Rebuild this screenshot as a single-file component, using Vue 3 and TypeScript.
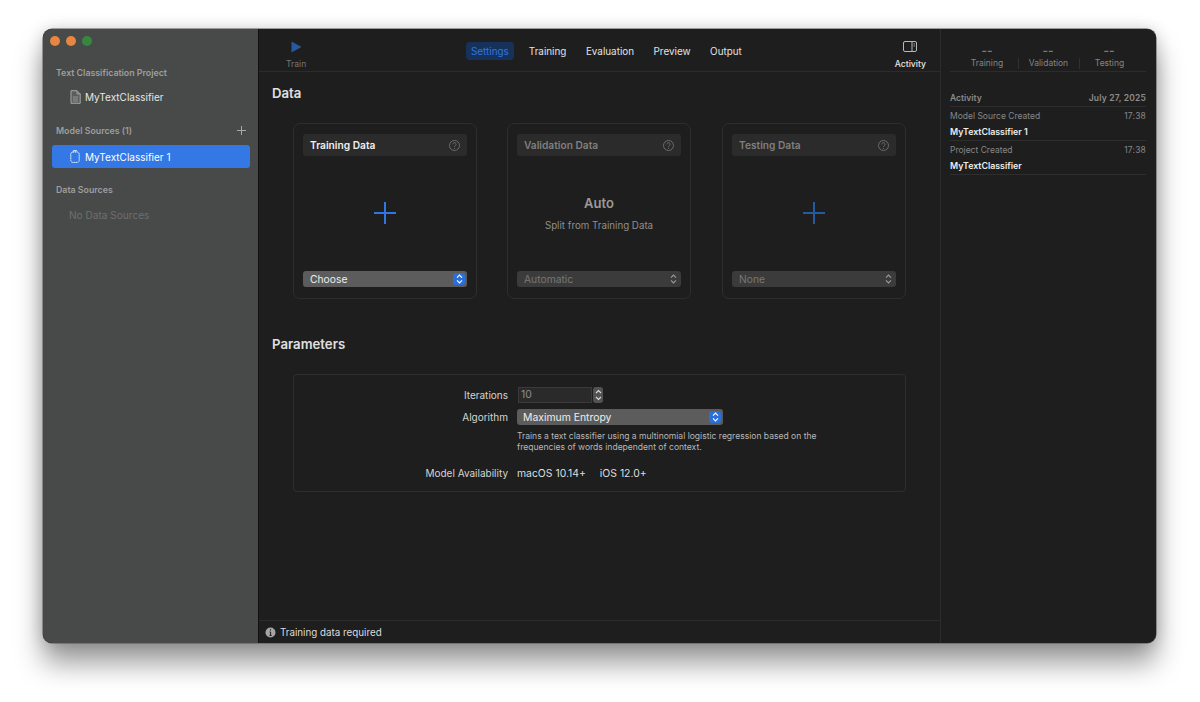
<script setup lang="ts">
const tabs = ['Settings', 'Training', 'Evaluation', 'Preview', 'Output']
const metrics = ['Training', 'Validation', 'Testing']
const activity = [
  { title: 'Model Source Created', time: '17:38', name: 'MyTextClassifier 1' },
  { title: 'Project Created', time: '17:38', name: 'MyTextClassifier' }
]
</script>

<template>
  <div class="page">
    <div class="window">
      <aside class="sidebar">
        <div class="lights">
          <span class="light orange"></span>
          <span class="light orange"></span>
          <span class="light green"></span>
        </div>
        <div class="side-head first">Text Classification Project</div>
        <div class="side-row project">
          <svg class="file-icon" width="11" height="14" viewBox="0 0 11 14" fill="none" stroke="#a5a5a5" stroke-width="1">
            <path d="M1 .7h6l3.2 3.2v9.4H1z" fill="#5b5c5c" />
            <path d="M7 .7v3.2h3.2" />
            <path d="M2.8 7h5.4M2.8 9h5.4M2.8 11h5.4" stroke-width=".8" />
          </svg>
          <span>MyTextClassifier</span>
        </div>
        <div class="side-head models">
          <span>Model Sources (1)</span>
          <svg width="9" height="9" viewBox="0 0 9 9" stroke="#a8a8a8" stroke-width="1"><path d="M4.5 0v9M0 4.5h9" /></svg>
        </div>
        <div class="side-row selected">
          <svg class="file-icon" width="10" height="13" viewBox="0 0 10 13" fill="none" stroke="#fff" stroke-width="1" stroke-dasharray="1.4 .7">
            <rect x=".8" y="2" width="8.4" height="10.4" rx="2" />
            <path d="M3 .8h4" stroke-dasharray="none" />
          </svg>
          <span>MyTextClassifier 1</span>
        </div>
        <div class="side-head sources">Data Sources</div>
        <div class="side-empty">No Data Sources</div>
      </aside>

      <main class="main">
        <header class="toolbar">
          <div class="train">
            <svg width="11" height="12" viewBox="0 0 11 12"><path d="M.5 .5 10.5 6 .5 11.5z" fill="#27599f" /></svg>
            <span>Train</span>
          </div>
          <nav class="tabs">
            <span v-for="(t, i) in tabs" :key="t" :class="['tab', { on: i === 0 }]">{{ t }}</span>
          </nav>
          <div class="activity-btn">
            <svg width="14" height="11" viewBox="0 0 14 11" fill="none" stroke="#b8b8b8" stroke-width="1">
              <rect x=".5" y=".5" width="13" height="10" rx="1.5" />
              <path d="M9 .5v10" />
              <path d="M10.5 3h1.5M10.5 5h1.5" stroke-width=".8" />
            </svg>
            <span>Activity</span>
          </div>
        </header>

        <div class="content">
          <h2 class="heading">Data</h2>
          <div class="cards">
            <section class="card">
              <div class="card-head active">
                <span>Training Data</span>
                <svg class="help" width="11" height="11" viewBox="0 0 11 11" fill="none" stroke="#6c6c6c"><circle cx="5.5" cy="5.5" r="5" /><path d="M3.9 4.3a1.6 1.6 0 1 1 2.4 1.4c-.5.3-.8.6-.8 1.2" /><path d="M5.5 7.8v1" /></svg>
              </div>
              <div class="card-body">
                <svg width="24" height="24" viewBox="0 0 24 24" stroke="#2f76e0" stroke-width="2"><path d="M12 1v22M1 12h22" /></svg>
              </div>
              <div class="select live">
                <span>Choose</span>
                <span class="chevrons blue">
                  <svg width="7" height="10" viewBox="0 0 7 10" fill="none" stroke="#fff" stroke-width="1.1"><path d="M1 3.6 3.5 1 6 3.6M1 6.4 3.5 9 6 6.4" /></svg>
                </span>
              </div>
            </section>

            <section class="card">
              <div class="card-head">
                <span>Validation Data</span>
                <svg class="help" width="11" height="11" viewBox="0 0 11 11" fill="none" stroke="#6c6c6c"><circle cx="5.5" cy="5.5" r="5" /><path d="M3.9 4.3a1.6 1.6 0 1 1 2.4 1.4c-.5.3-.8.6-.8 1.2" /><path d="M5.5 7.8v1" /></svg>
              </div>
              <div class="card-body auto">
                <strong>Auto</strong>
                <span>Split from Training Data</span>
              </div>
              <div class="select">
                <span>Automatic</span>
                <span class="chevrons">
                  <svg width="7" height="10" viewBox="0 0 7 10" fill="none" stroke="#9a9a9a" stroke-width="1.1"><path d="M1 3.6 3.5 1 6 3.6M1 6.4 3.5 9 6 6.4" /></svg>
                </span>
              </div>
            </section>

            <section class="card">
              <div class="card-head">
                <span>Testing Data</span>
                <svg class="help" width="11" height="11" viewBox="0 0 11 11" fill="none" stroke="#6c6c6c"><circle cx="5.5" cy="5.5" r="5" /><path d="M3.9 4.3a1.6 1.6 0 1 1 2.4 1.4c-.5.3-.8.6-.8 1.2" /><path d="M5.5 7.8v1" /></svg>
              </div>
              <div class="card-body">
                <svg width="24" height="24" viewBox="0 0 24 24" stroke="#265a9f" stroke-width="2"><path d="M12 1v22M1 12h22" /></svg>
              </div>
              <div class="select">
                <span>None</span>
                <span class="chevrons">
                  <svg width="7" height="10" viewBox="0 0 7 10" fill="none" stroke="#9a9a9a" stroke-width="1.1"><path d="M1 3.6 3.5 1 6 3.6M1 6.4 3.5 9 6 6.4" /></svg>
                </span>
              </div>
            </section>
          </div>

          <h2 class="heading params-heading">Parameters</h2>
          <section class="params">
            <div class="param-row first-row">
              <label>Iterations</label>
              <div class="stepper-wrap">
                <div class="num">10</div>
                <div class="stepper">
                  <svg width="7" height="12" viewBox="0 0 7 12" fill="none" stroke="#dcdcdc" stroke-width="1.1"><path d="M1 4 3.5 1.5 6 4M1 8 3.5 10.5 6 8" /></svg>
                </div>
              </div>
            </div>
            <div class="param-row algo-row">
              <label>Algorithm</label>
              <div class="select live algo">
                <span>Maximum Entropy</span>
                <span class="chevrons blue">
                  <svg width="7" height="10" viewBox="0 0 7 10" fill="none" stroke="#fff" stroke-width="1.1"><path d="M1 3.6 3.5 1 6 3.6M1 6.4 3.5 9 6 6.4" /></svg>
                </span>
              </div>
            </div>
            <p class="algo-note">Trains a text classifier using a multinomial logistic regression based on the<br />frequencies of words independent of context.</p>
            <div class="param-row avail-row">
              <label>Model Availability</label>
              <div class="avail">
                <span>macOS 10.14+</span>
                <span>iOS 12.0+</span>
              </div>
            </div>
          </section>
        </div>

        <footer class="status">
          <svg width="11" height="11" viewBox="0 0 11 11"><circle cx="5.5" cy="5.5" r="5" fill="#a5a5a5" /><path d="M5.5 2.2v1.3M4.5 5h1.1v3.4M4.4 8.4h2.3" stroke="#1e1e1e" stroke-width="1" fill="none" /></svg>
          <span>Training data required</span>
        </footer>
      </main>

      <aside class="panel">
        <div class="metrics">
          <div v-for="m in metrics" :key="m" class="metric">
            <b>--</b>
            <span>{{ m }}</span>
          </div>
        </div>
        <div class="log-head">
          <span>Activity</span>
          <span class="wide">July 27, 2025</span>
        </div>
        <div v-for="a in activity" :key="a.title" class="log-item">
          <div class="log-top">
            <span>{{ a.title }}</span>
            <span class="wide">{{ a.time }}</span>
          </div>
          <div class="log-name">{{ a.name }}</div>
        </div>
      </aside>
    </div>
  </div>
</template>

<style>
html, body { background: #fff; }
</style>

<style scoped>
.page {
  width: 1200px;
  height: 702px;
  padding: 29px 44px 59px 43px;
  box-sizing: border-box;
  overflow: hidden;
  font-family: Inter, "Liberation Sans", sans-serif;
  background: #fff;
}

.window {
  display: flex;
  height: 100%;
  border-radius: 9px;
  overflow: hidden;
  background: #1e1e1e;
  box-shadow: 0 0 0 .5px #555, 0 20px 28px rgba(0, 0, 0, .4), 0 0 16px rgba(0, 0, 0, .18);
}

.sidebar {
  width: 216px;
  flex: none;
  background: #484a49;
  border-right: 1px solid #111;
  box-sizing: border-box;
  padding-top: 7px;
  font-size: 10px;
  color: #f0f0f0;
}

.lights { display: flex; gap: 6px; padding-left: 7px; }
.light { width: 10px; height: 10px; border-radius: 50%; }
.orange { background: #e8853f; }
.green { background: #37883f; }

.side-head {
  font-size: 8.8px;
  font-weight: 600;
  color: #9d9e9e;
  padding: 0 12px 0 13px;
  display: flex;
  justify-content: space-between;
  align-items: center;
  height: 12px;
}
.first { margin-top: 20px; }
.models { margin-top: 16px; }
.sources { margin-top: 15px; }

.side-row { display: flex; align-items: center; height: 23px; }
.project { margin-top: 7px; padding-left: 27px; gap: 4px; color: #e6e6e6; }
.selected {
  margin: 9px 8px 0 9px;
  padding-left: 18px;
  gap: 5px;
  background: #3478e6;
  border-radius: 3px;
  color: #fff;
}

.side-empty { margin: 14px 0 0 26px; font-size: 10.1px; color: #6d6e6e; }

.main { width: 681px; flex: none; display: flex; flex-direction: column; }

.toolbar {
  height: 43px;
  flex: none;
  box-sizing: border-box;
  border-bottom: 1px solid #2c2c2c;
  position: relative;
  display: flex;
  justify-content: space-between;
  padding: 12px 14px 0 27px;
}
.train {
  display: flex;
  flex-direction: column;
  align-items: center;
  gap: 6px;
  font-size: 8.6px;
  color: #777;
}
.tabs {
  position: absolute;
  left: 207px;
  top: 13px;
  display: flex;
  gap: 19.5px;
  font-size: 9.9px;
  color: #e2e2e2;
}
.tab { height: 18px; line-height: 18px; border-radius: 4px; }
.tab.on {
  color: #2f76e0;
  background: #17325a;
  padding: 0 5px;
  margin-right: -4.5px;
}
.activity-btn {
  display: flex;
  flex-direction: column;
  align-items: center;
  gap: 7px;
  font-size: 8.6px;
  font-weight: 500;
  color: #e6e6e6;
}

.content { flex: 1; padding-left: 13px; color: #e6e6e6; }
.heading {
  margin: 0;
  font-size: 13.2px;
  font-weight: 600;
  line-height: 16px;
  color: #e0e0e0;
}
.content > .heading:first-child { margin-top: 13px; }

.cards { display: flex; gap: 30px; margin: 22px 0 0 21px; }
.card {
  width: 184px;
  height: 176px;
  box-sizing: border-box;
  border: 1px solid #2e2e2e;
  border-radius: 7px;
  padding: 10px 9px 11px;
  display: flex;
  flex-direction: column;
}
.card:last-child { margin-left: 1px; }
.card-head {
  height: 22px;
  flex: none;
  background: #2b2b2b;
  border-radius: 3px;
  display: flex;
  align-items: center;
  justify-content: space-between;
  padding: 0 7px;
  font-size: 10.2px;
  font-weight: 600;
  color: #7f7f7f;
}
.card-head.active { color: #f0f0f0; }
.card-body {
  flex: 1;
  display: flex;
  align-items: center;
  justify-content: center;
  padding-bottom: 1px;
}
.card-body.auto {
  flex-direction: column;
  gap: 9px;
  font-size: 9.75px;
  color: #8f8f8f;
}
.card-body.auto strong { font-size: 13px; font-weight: 600; color: #9a9a9a; }

.select {
  height: 16px;
  flex: none;
  background: #3b3b3b;
  border-radius: 3px;
  display: flex;
  align-items: center;
  justify-content: space-between;
  padding: 0 2px 0 7px;
  font-size: 10.3px;
  color: #777;
}
.select.live { background: #5c5c5c; color: #ececec; }
.card .select > span:first-child { margin-top: -1px; }
.chevrons {
  width: 12px;
  height: 12px;
  border-radius: 3px;
  display: flex;
  align-items: center;
  justify-content: center;
}
.chevrons.blue { background: #2a6fdc; }

.params-heading { margin-top: 37px; }
.params {
  width: 613px;
  height: 118px;
  box-sizing: border-box;
  margin: 22px 0 0 21px;
  border: 1px solid #2e2e2e;
  border-radius: 4px;
  padding-top: 12px;
  font-size: 10.4px;
}
.param-row { display: flex; align-items: center; height: 16px; }
.param-row label { width: 214px; flex: none; text-align: right; margin-right: 9px; font-size: 10px; color: #d4d4d4; }
.algo-row { margin-top: 6px; }
.avail-row { margin-top: 12px; }
.algo { width: 206px; box-sizing: border-box; padding-left: 6px; font-size: 10.4px; }

.stepper-wrap { display: flex; align-items: center; margin-left: 1px; }
.num {
  width: 74px;
  height: 16px;
  line-height: 14px;
  box-sizing: border-box;
  padding-left: 2px;
  background: #2a2a2a;
  border: 1px solid #3a3a3a;
  color: #8e8e8e;
}
.stepper {
  width: 10px;
  height: 16px;
  margin-left: 1px;
  background: #525252;
  border-radius: 3px;
  display: flex;
  align-items: center;
  justify-content: center;
}

.algo-note {
  margin: 6px 0 0 223px;
  font-size: 8.55px;
  line-height: 11px;
  color: #b8b8b8;
}
.avail { display: flex; gap: 14px; color: #dedede; }

.status {
  height: 23px;
  flex: none;
  box-sizing: border-box;
  border-top: 1px solid #2c2c2c;
  display: flex;
  align-items: center;
  gap: 4px;
  padding-left: 6px;
  font-size: 9.8px;
  color: #dcdcdc;
}

.panel {
  flex: 1;
  border-left: 1px solid #2c2c2c;
  box-sizing: border-box;
  padding: 0 10px 0 9px;
  font-size: 8.5px;
}
.metrics {
  display: flex;
  justify-content: center;
  height: 43px;
  box-sizing: border-box;
  border-bottom: 1px solid #2c2c2c;
  padding-top: 16px;
}
.metric {
  width: 61px;
  flex: none;
  display: flex;
  flex-direction: column;
  align-items: center;
  gap: 2px;
  color: #858585;
}
.metric b { font-weight: 600; font-size: 12px; line-height: 11px; color: #7a7a7a; }
.metric span { width: 100%; height: 11px; line-height: 11px; text-align: center; box-sizing: border-box; }
.metric + .metric span { border-left: 1px solid #303030; }

.log-head {
  margin-top: 21px;
  height: 13px;
  display: flex;
  justify-content: space-between;
  font-weight: 600;
  color: #8c8c8c;
  border-bottom: 1px solid #2e2e2e;
}
.wide { letter-spacing: .18px; }
.log-item { height: 34px; box-sizing: border-box; padding-top: 4px; border-bottom: 1px solid #2e2e2e; }
.log-top { display: flex; justify-content: space-between; color: #878787; height: 14.5px; line-height: 11px; }
.log-name { font-size: 8.8px; font-weight: 600; color: #ededed; line-height: 11px; }
</style>
